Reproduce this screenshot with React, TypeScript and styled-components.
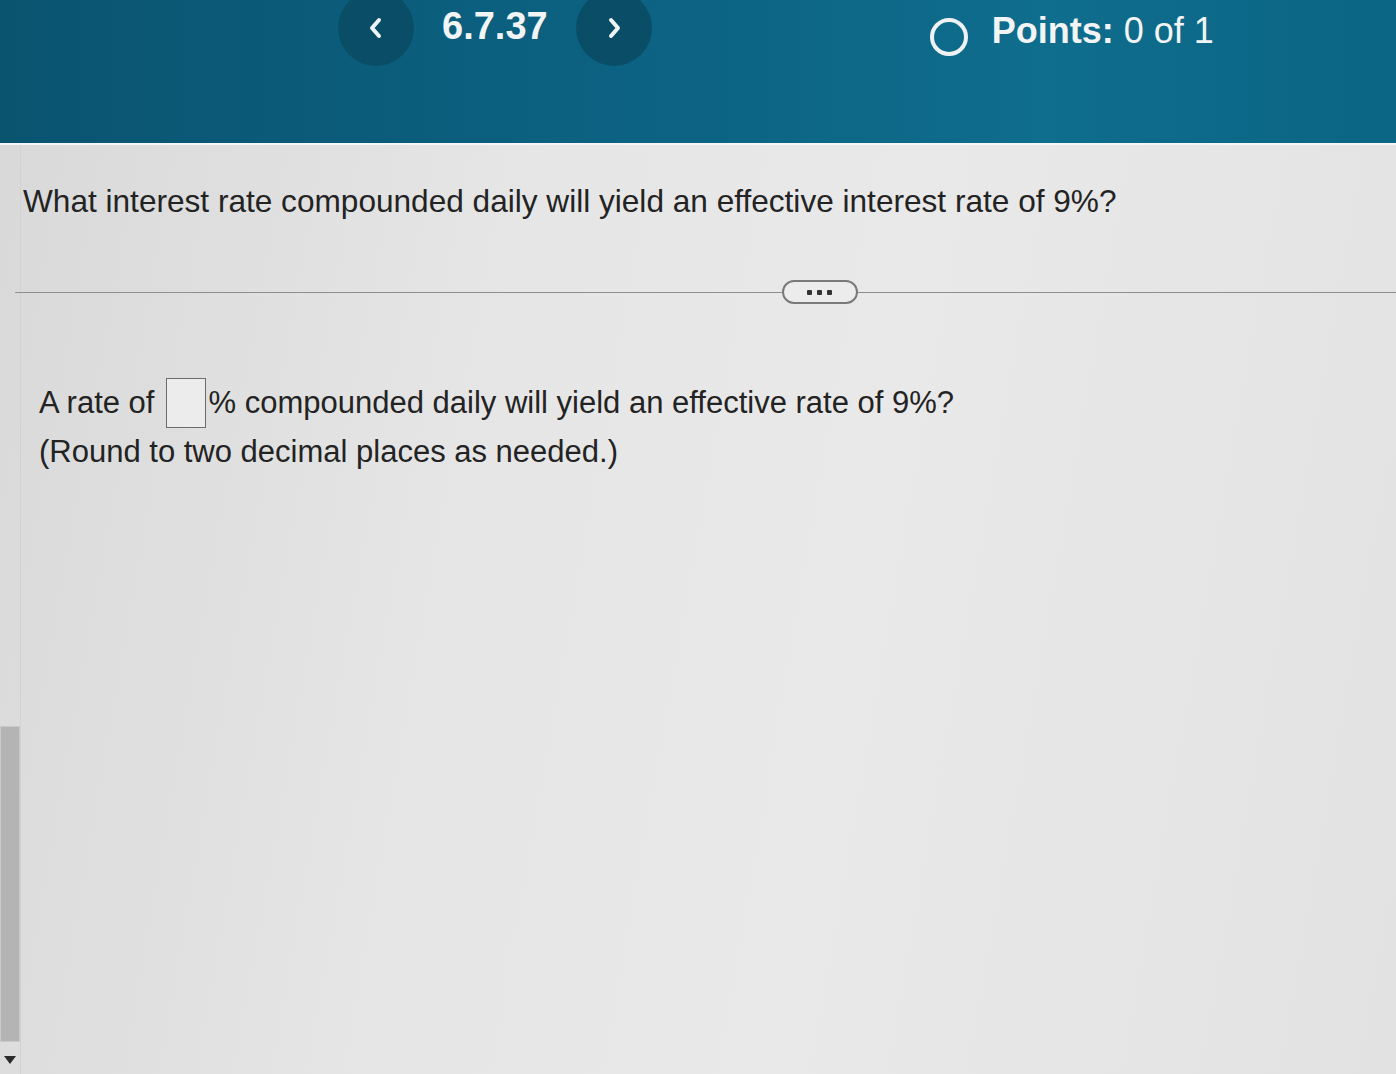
import React, { FC } from 'react';
import styled, { createGlobalStyle } from 'styled-components';

const GlobalStyle = createGlobalStyle`
  html, body {
    margin: 0;
    padding: 0;
    height: 100%;
    background: #e0e0e0;
    font-family: 'Liberation Sans', Arial, sans-serif;
  }
  #root {
    height: 100%;
  }
`;

const Page = styled.div`
  display: flex;
  flex-direction: column;
  width: 1396px;
  height: 1074px;
  overflow: hidden;
`;

const Header = styled.header`
  display: flex;
  align-items: flex-start;
  height: 145px;
  flex-shrink: 0;
  padding: 0 0 0 338px;
  box-sizing: border-box;
  background: linear-gradient(90deg, #0a5470 0%, #0c6282 45%, #0f6d8d 75%, #0b6584 100%);
  border-bottom: 2px solid #f4f6f7;
`;

const Nav = styled.div`
  display: flex;
  align-items: center;
  gap: 28px;
  margin-top: -10px;
`;

const NavButton = styled.button`
  display: flex;
  align-items: center;
  justify-content: center;
  width: 76px;
  height: 76px;
  border-radius: 50%;
  border: none;
  background: #0a4d66;
  color: #eef3f5;
  padding: 0;
  cursor: pointer;
`;

const ItemNumber = styled.span`
  font-size: 38px;
  font-weight: bold;
  color: #f2f4f5;
  margin-top: -4px;
`;

const Points = styled.div`
  display: flex;
  align-items: center;
  gap: 24px;
  margin-left: 278px;
  margin-top: 6px;
  font-size: 36px;
  color: #f2f4f5;

  b {
    font-weight: bold;
  }
`;

const StatusRing = styled.span`
  display: inline-block;
  width: 30px;
  height: 30px;
  border: 4px solid #eef2f3;
  border-radius: 50%;
  margin-top: 12px;
`;

const Body = styled.div`
  flex: 1;
  display: flex;
  background: linear-gradient(100deg, #d9d9d9 0%, #e6e6e6 35%, #e9e9e9 60%, #e2e2e2 100%);
`;

const Gutter = styled.div`
  width: 20px;
  display: flex;
  flex-direction: column;
  justify-content: flex-end;
  align-items: center;
  padding-bottom: 10px;
  border-right: 1px solid #d2d2d2;
`;

const ScrollThumb = styled.div`
  width: 20px;
  height: 316px;
  background: #b4b4b4;
  border: 1px solid #c9c9c9;
  box-sizing: border-box;
`;

const ScrollArrow = styled.div`
  width: 0;
  height: 0;
  margin-top: 14px;
  border-left: 6px solid transparent;
  border-right: 6px solid transparent;
  border-top: 8px solid #2a2a2a;
`;

const Content = styled.main`
  flex: 1;
  display: flex;
  flex-direction: column;
`;

const Question = styled.p`
  margin: 38px 0 0 2px;
  font-size: 31.6px;
  color: #232323;
`;

const DividerRow = styled.div`
  display: flex;
  align-items: center;
  margin: 60px 0 0 -6px;
`;

const Rule = styled.div<{ $grow: number }>`
  flex: ${(p) => p.$grow};
  height: 1px;
  background: #8e8e8e;
`;

const MoreButton = styled.button`
  display: flex;
  align-items: center;
  justify-content: center;
  gap: 5px;
  width: 76px;
  height: 24px;
  border: 2px solid #7a7a7a;
  border-radius: 12px;
  background: #ececec;
  padding: 0;
  cursor: pointer;

  span {
    width: 5px;
    height: 5px;
    border-radius: 1px;
    background: #333;
  }
`;

const Answer = styled.div`
  margin: 74px 0 0 18px;
  font-size: 31px;
  color: #232323;
  line-height: 48px;
`;

const AnswerLine = styled.div`
  display: flex;
  align-items: center;
`;

const Blank = styled.input`
  width: 40px;
  height: 50px;
  margin: 0 2px 0 12px;
  border: 1.5px solid #6c6c6c;
  background: #ececec;
  box-sizing: border-box;
  padding: 0;
`;

const Chevron: FC<{ dir: 'left' | 'right' }> = ({ dir }) => (
  <svg width="16" height="22" viewBox="0 0 16 22">
    <path
      d={dir === 'left' ? 'M11 3 L4 11 L11 19' : 'M5 3 L12 11 L5 19'}
      fill="none"
      stroke="currentColor"
      strokeWidth="4"
      strokeLinecap="round"
      strokeLinejoin="round"
    />
  </svg>
);

const App: FC = (): JSX.Element => {
  return (
    <Page>
      <GlobalStyle />
      <Header>
        <Nav>
          <NavButton aria-label="Previous question">
            <Chevron dir="left" />
          </NavButton>
          <ItemNumber>6.7.37</ItemNumber>
          <NavButton aria-label="Next question">
            <Chevron dir="right" />
          </NavButton>
        </Nav>
        <Points>
          <StatusRing />
          <span>
            <b>Points:</b> 0 of 1
          </span>
        </Points>
      </Header>
      <Body>
        <Gutter>
          <ScrollThumb />
          <ScrollArrow />
        </Gutter>
        <Content>
          <Question>
            What interest rate compounded daily will yield an effective
            interest rate of 9%?
          </Question>
          <DividerRow>
            <Rule $grow={766} />
            <MoreButton aria-label="More">
              <span />
              <span />
              <span />
            </MoreButton>
            <Rule $grow={538} />
          </DividerRow>
          <Answer>
            <AnswerLine>
              A rate of
              <Blank aria-label="rate" />
              % compounded daily will yield an effective rate of 9%?
            </AnswerLine>
            <div>(Round to two decimal places as needed.)</div>
          </Answer>
        </Content>
      </Body>
    </Page>
  );
};

export default App;
